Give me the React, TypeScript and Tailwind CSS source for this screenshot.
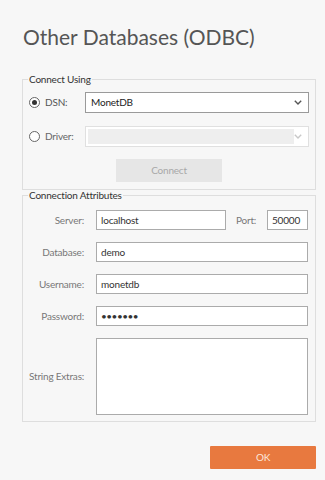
import { useState } from 'react';

function Chevron({ disabled }: { disabled?: boolean }) {
  return (
    <svg width="8" height="5" viewBox="0 0 8 5" className="shrink-0">
      <path d="M0.8 0.8 L4 4 L7.2 0.8" fill="none" stroke={disabled ? '#c8c8c8' : '#555'} strokeWidth="1.4" />
    </svg>
  );
}

function Radio({ checked }: { checked?: boolean }) {
  return (
    <span className="flex h-[11px] w-[11px] shrink-0 items-center justify-center rounded-full border border-[#666] bg-white">
      {checked && <span className="h-[5px] w-[5px] rounded-full bg-[#333]" />}
    </span>
  );
}

export default function App() {
  const [mode, setMode] = useState<'dsn' | 'driver'>('dsn');

  const label = 'whitespace-nowrap text-right text-[#777]';
  const input = 'h-[20px] border border-[#ababab] bg-white px-[4px] text-[10px] text-[#333] outline-none';

  return (
    <div className="h-[480px] w-[325px] bg-[#f7f7f7] pl-[22px] pr-[9px] font-['Lato',sans-serif] text-[10px] tracking-[-0.2px]">
      <h1 className="pt-[24px] pl-[1px] text-[21px] leading-[26px] tracking-normal text-[#555]">Other Databases (ODBC)</h1>

      <fieldset className="mt-[23px] border border-[#dedede] px-[6px] pb-[7px]">
        <legend className="-ml-[1px] px-[1px] leading-[13px] text-[#333]">Connect Using</legend>

        <div className="mt-[6px] flex items-center">
          <button onClick={() => setMode('dsn')} className="flex w-[56px] items-center gap-[5px] text-[#555]">
            <Radio checked={mode === 'dsn'} />
            <span>DSN:</span>
          </button>
          <div className="flex h-[21px] flex-1 items-center justify-between border border-[#9a9a9a] bg-white pl-[5px] pr-[6px]">
            <span className="text-[#222]">MonetDB</span>
            <Chevron />
          </div>
        </div>

        <div className="mt-[13px] flex items-center">
          <button onClick={() => setMode('driver')} className="flex w-[56px] items-center gap-[5px] text-[#666]">
            <Radio checked={mode === 'driver'} />
            <span>Driver:</span>
          </button>
          <div className="flex h-[21px] flex-1 items-center justify-between border border-[#e0e0e0] bg-white p-[2px] pr-[6px]">
            <span className="h-full w-[206px] bg-[#eeeeee]" />
            <Chevron disabled />
          </div>
        </div>

        <div className="mt-[12px] flex justify-center">
          <button className="h-[23px] w-[106px] bg-[#e6e6e6] text-[#a8a8a8]">Connect</button>
        </div>
      </fieldset>

      <fieldset className="-mt-[1px] border border-[#dedede] pl-[6px] pr-[7px] pb-[6px]">
        <legend className="-ml-[1px] px-[1px] leading-[13px] text-[#333]">Connection Attributes</legend>

        <div className="mt-[8px] grid grid-cols-[55px_1fr] items-center gap-x-[12px] gap-y-[12px]">
          <span className={label}>Server:</span>
          <div className="flex items-center">
            <input className={`${input} w-[130px]`} defaultValue="localhost" />
            <span className="ml-[10px] w-[31px] text-[#777]">Port:</span>
            <input className={`${input} w-[41px]`} defaultValue="50000" />
          </div>

          <span className={label}>Database:</span>
          <input className={input} defaultValue="demo" />

          <span className={label}>Username:</span>
          <input className={input} defaultValue="monetdb" />

          <span className={label}>Password:</span>
          <input className={`${input} text-[9px] tracking-[-0.5px]`} type="password" defaultValue="monetdb" />

          <span className={label}>String Extras:</span>
          <textarea className="h-[77px] resize-none border border-[#ababab] bg-white p-[3px] outline-none" />
        </div>
      </fieldset>

      <div className="mt-[24px] flex justify-end">
        <button className="h-[23px] w-[106px] rounded-[1px] bg-[#e8793f] text-[#fde8dc]">OK</button>
      </div>
    </div>
  );
}
